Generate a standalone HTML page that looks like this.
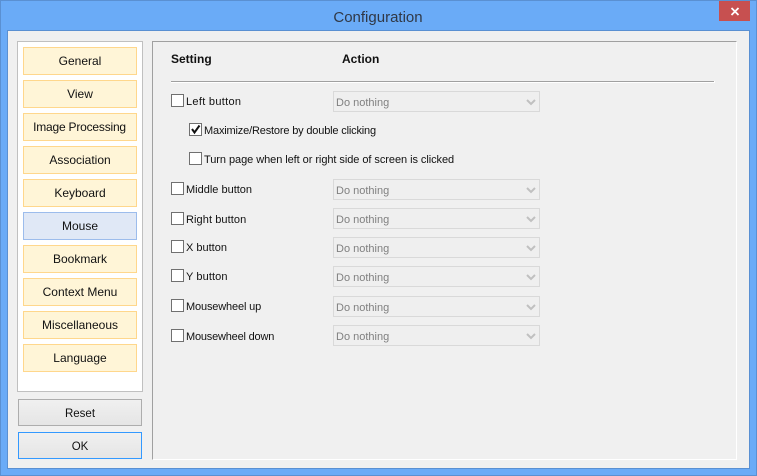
<!DOCTYPE html>
<html><head><meta charset="utf-8"><style>
html,body{margin:0;padding:0}
body{width:757px;height:476px;overflow:hidden;position:relative;background:#6aabf7;font-family:"Liberation Sans",sans-serif;font-size:11px;color:#111}
div,span{position:absolute;box-sizing:border-box}
.t{white-space:nowrap;line-height:14px;height:14px;margin-top:1px}
.n{left:23px;width:114px;height:28px;background:#fff5d7;border:1px solid #ffd78c;text-align:center;line-height:27px;white-space:nowrap;font-size:12px}
.b{left:18px;width:124px;height:27px;border:1px solid #adadad;background:linear-gradient(#f0f0f0,#e5e5e5);text-align:center;line-height:29px;font-size:11.5px}
.c{width:13px;height:13px;background:#fff;border:1px solid #707070}
.s{left:333px;width:207px;height:21px;background:#efefef;border:1px solid #d9d9d9;color:#808080;padding-left:2px;line-height:22px}
.s svg{position:absolute;right:3px;top:7px}
</style></head><body>
<div style="left:0;top:0;width:757px;height:476px;border:1px solid #5a90d2"></div>
<div class="t" style="left:178px;top:8px;width:400px;height:18px;line-height:18px;text-align:center;font-size:15px;color:#303846">Configuration</div>
<div style="left:719px;top:1px;width:31px;height:20px;background:#c75050"></div>
<svg style="position:absolute;left:719px;top:1px" width="31" height="20"><path d="M12.5 7L19.5 14M19.5 7L12.5 14" stroke="#fff" stroke-width="1.8" fill="none"/></svg>
<div style="left:7px;top:30px;width:743px;height:439px;background:#f0f0f0;border:1px solid #5a90d2"></div>

<div style="left:17px;top:41px;width:126px;height:351px;background:#fff;border:1px solid #c0c0c0"></div>
<div class="n" style="top:47px">General</div>
<div class="n" style="top:80px">View</div>
<div class="n" style="top:113px;letter-spacing:-0.2px;text-indent:-1px">Image Processing</div>
<div class="n" style="top:146px">Association</div>
<div class="n" style="top:179px">Keyboard</div>
<div class="n" style="top:212px;background:#e0e8f6;border-color:#9cbcec">Mouse</div>
<div class="n" style="top:245px">Bookmark</div>
<div class="n" style="top:278px">Context Menu</div>
<div class="n" style="top:311px">Miscellaneous</div>
<div class="n" style="top:344px">Language</div>
<div class="b" style="top:399px">Reset</div>
<div class="b" style="top:432px;border-color:#3399ff">OK</div>

<div style="left:152px;top:41px;width:585px;height:419px;border:1px solid #a0a0a0;border-right:1px solid #fff;border-bottom:1px solid #fff"></div>
<div class="t" style="left:171px;top:51px;font-weight:bold;font-size:12px">Setting</div>
<div class="t" style="left:342px;top:51px;font-weight:bold;font-size:12px">Action</div>
<div style="left:171px;top:81px;width:544px;height:2px;background:#fff"></div>
<div style="left:171px;top:81px;width:543px;height:1px;background:#a0a0a0"></div>

<div class="c" style="left:171px;top:94px"></div><div class="t" style="left:186px;top:94px;letter-spacing:0.3px">Left button</div>
<div class="s" style="top:91px">Do nothing<svg width="10" height="7"><path d="M1 1L5 5L9 1" stroke="#c0c0c0" stroke-width="2" fill="none"/></svg></div>

<div class="c" style="left:189px;top:123px"><svg style="position:absolute;left:0;top:0" width="11" height="11"><path d="M2 5L4.5 8.5L9.5 1.5" stroke="#111" stroke-width="2" fill="none"/></svg></div>
<div class="t" style="left:204px;top:123px;letter-spacing:-0.17px">Maximize/Restore by double clicking</div>
<div class="c" style="left:189px;top:152px"></div><div class="t" style="left:204px;top:152px;letter-spacing:-0.06px">Turn page when left or right side of screen is clicked</div>

<div class="c" style="left:171px;top:182px"></div><div class="t" style="left:186px;top:182px">Middle button</div>
<div class="s" style="top:179px">Do nothing<svg width="10" height="7"><path d="M1 1L5 5L9 1" stroke="#c0c0c0" stroke-width="2" fill="none"/></svg></div>

<div class="c" style="left:171px;top:212px"></div><div class="t" style="left:186px;top:212px;letter-spacing:0.08px">Right button</div>
<div class="s" style="top:208px">Do nothing<svg width="10" height="7"><path d="M1 1L5 5L9 1" stroke="#c0c0c0" stroke-width="2" fill="none"/></svg></div>

<div class="c" style="left:171px;top:240px"></div><div class="t" style="left:186px;top:240px">X button</div>
<div class="s" style="top:237px">Do nothing<svg width="10" height="7"><path d="M1 1L5 5L9 1" stroke="#c0c0c0" stroke-width="2" fill="none"/></svg></div>

<div class="c" style="left:171px;top:269px"></div><div class="t" style="left:186px;top:269px;letter-spacing:0.1px">Y button</div>
<div class="s" style="top:266px">Do nothing<svg width="10" height="7"><path d="M1 1L5 5L9 1" stroke="#c0c0c0" stroke-width="2" fill="none"/></svg></div>

<div class="c" style="left:171px;top:299px"></div><div class="t" style="left:186px;top:299px;letter-spacing:-0.15px">Mousewheel up</div>
<div class="s" style="top:296px">Do nothing<svg width="10" height="7"><path d="M1 1L5 5L9 1" stroke="#c0c0c0" stroke-width="2" fill="none"/></svg></div>

<div class="c" style="left:171px;top:329px"></div><div class="t" style="left:186px;top:329px;letter-spacing:-0.2px">Mousewheel down</div>
<div class="s" style="top:325px">Do nothing<svg width="10" height="7"><path d="M1 1L5 5L9 1" stroke="#c0c0c0" stroke-width="2" fill="none"/></svg></div>
</body></html>
